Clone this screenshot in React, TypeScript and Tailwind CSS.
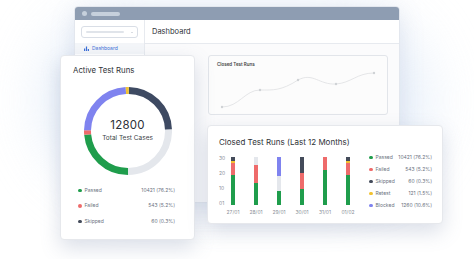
import React from "react"

const C = {
  green: "#1f9d4c",
  red: "#ee6b6b",
  dark: "#444b5a",
  navy: "#3e4a62",
  gray: "#e4e7ec",
  blue: "#7f83ef",
  yellow: "#f2c230",
}

function arc(cx: number, cy: number, r: number, a0: number, a1: number) {
  const p = (a: number) => {
    const t = ((a - 90) * Math.PI) / 180
    return [cx + r * Math.cos(t), cy + r * Math.sin(t)]
  }
  const [x0, y0] = p(a0)
  const [x1, y1] = p(a1)
  const large = a1 - a0 > 180 ? 1 : 0
  return `M${x0.toFixed(2)},${y0.toFixed(2)} A${r},${r} 0 ${large} 1 ${x1.toFixed(2)},${y1.toFixed(2)}`
}

const donut = [
  { from: 1, to: 88, color: C.navy },
  { from: 88, to: 180, color: C.gray },
  { from: 180, to: 265, color: C.green },
  { from: 265, to: 271, color: C.red },
  { from: 271, to: 357, color: C.blue },
  { from: 357, to: 361, color: C.yellow },
]

function Donut() {
  return (
    <div className="relative w-[88px] h-[88px]">
      <svg width="88" height="88" viewBox="0 0 88 88">
        {donut.map((s, i) => (
          <path key={i} d={arc(44, 44, 40.5, s.from, s.to)} fill="none" stroke={s.color} strokeWidth="7" />
        ))}
      </svg>
      <div className="absolute inset-0 flex flex-col items-center justify-center">
        <span className="text-[11.5px] leading-none text-[#2b2f36] tracking-[0.2px]">12800</span>
        <span className="text-[6.5px] leading-none text-[#3b3f46] mt-[4px]">Total Test Cases</span>
      </div>
    </div>
  )
}

// segments listed top to bottom, heights in px
const bars = [
  { label: "27/01", segs: [[C.dark, 4], [C.yellow, 2], [C.red, 12], [C.green, 30]] },
  { label: "28/01", segs: [[C.gray, 8], [C.red, 18], [C.green, 22]] },
  { label: "29/01", segs: [[C.blue, 19], [C.gray, 15], [C.green, 14]] },
  { label: "30/01", segs: [[C.dark, 16], [C.red, 16], [C.green, 16]] },
  { label: "31/01", segs: [[C.red, 13], [C.green, 35]] },
  { label: "01/02", segs: [[C.dark, 4], [C.yellow, 2], [C.red, 12], [C.green, 30]] },
] as { label: string; segs: [string, number][] }[]

const barLegend = [
  { name: "Passed", value: "10421 (76.2%)", color: C.green },
  { name: "Failed", value: "543 (5.2%)", color: C.red },
  { name: "Skipped", value: "60 (0.3%)", color: C.dark },
  { name: "Retest", value: "121 (1.5%)", color: C.yellow },
  { name: "Blocked", value: "1260 (10.6%)", color: C.blue },
]

function LegendRow({ name, value, color }: { name: string; value: string; color: string }) {
  return (
    <div className="flex items-center justify-between text-[5px] leading-none text-[#6b7280] h-[5px]">
      <div className="flex items-center gap-[3px]">
        <span className="w-[3.5px] h-[3.5px] rounded-full" style={{ background: color }} />
        <span>{name}</span>
      </div>
      <span>{value}</span>
    </div>
  )
}

function BackWindow() {
  return (
    <div className="absolute left-[74px] top-[6px] w-[326px] h-[197px] rounded-[4px] bg-white shadow-[0_6px_24px_rgba(120,140,180,0.18)] border border-[#e3e7ee] overflow-hidden flex flex-col">
      <div className="h-[13px] bg-[#8e9db2] flex items-center px-[7px] gap-[4px] shrink-0">
        <span className="w-[5px] h-[5px] rounded-full bg-[#c6d0dc]" />
        <span className="w-[29px] h-[4px] rounded-full bg-[#c6d0dc]" />
      </div>
      <div className="flex flex-1">
        <div className="w-[70px] border-r border-[#e7eaef] bg-white flex flex-col">
          <div className="mx-[6px] mt-[6px] h-[12px] rounded-[3px] border border-[#d9dee6] flex items-center justify-between px-[4px]">
            <span className="w-[38px] h-[2px] rounded-full bg-[#e0e4ea]" />
            <span className="w-0 h-0 border-l-[1.5px] border-r-[1.5px] border-t-[1.5px] border-l-transparent border-r-transparent border-t-[#b5bcc7]" />
          </div>
          <div className="mt-[5px] h-[11px] bg-[#f4f6f9] flex items-center gap-[3px] pl-[9px]">
            <svg width="5" height="5" viewBox="0 0 5 5">
              <rect x="0" y="2.5" width="1.2" height="2.5" fill="#3b6fd8" />
              <rect x="1.9" y="0.5" width="1.2" height="4.5" fill="#3b6fd8" />
              <rect x="3.8" y="3" width="1.2" height="2" fill="#3b6fd8" />
            </svg>
            <span className="text-[5px] leading-none text-[#3b6fd8]">Dashboard</span>
          </div>
        </div>
        <div className="flex-1 flex flex-col">
          <div className="h-[24px] border-b border-[#e7eaef] flex items-center pl-[7px] shrink-0">
            <span className="text-[7.5px] leading-none text-[#30343b]">Dashboard</span>
          </div>
          <div className="flex-1 bg-[#fbfbfc]">
            <div className="ml-[63px] mt-[11px] w-[180px] h-[60px] rounded-[3px] border border-[#e2e5ea] bg-[#fcfcfc] relative">
              <span className="absolute left-[8px] top-[7px] text-[4.5px] leading-none font-semibold text-[#444]">Closed Test Runs</span>
              <svg className="absolute inset-0" width="180" height="60" viewBox="0 0 180 60">
                <path
                  d="M13,51 C30,51 36,34 51,34 C64,34 72,35 89,24 C104,16 110,29 127,28 C142,27 148,17 165,17"
                  fill="none"
                  stroke="#dedfe2"
                  strokeWidth="0.8"
                />
                {[
                  [13, 51],
                  [51, 34],
                  [89, 24],
                  [127, 28],
                  [165, 17],
                ].map(([x, y], i) => (
                  <circle key={i} cx={x} cy={y} r="1.2" fill="#cfd2d6" />
                ))}
              </svg>
            </div>
          </div>
        </div>
      </div>
    </div>
  )
}

function ActiveCard() {
  return (
    <div className="absolute left-[60px] top-[55px] w-[135px] h-[185px] rounded-[4px] bg-white border border-[#e6e8ec] shadow-[0_8px_20px_rgba(90,110,150,0.22)] flex flex-col">
      <span className="mt-[11px] ml-[12px] text-[7.8px] leading-none text-[#2f3338]">Active Test Runs</span>
      <div className="flex justify-center mt-[12px]">
        <Donut />
      </div>
      <div className="mt-[13px] ml-[17px] mr-[19px] flex flex-col gap-[10.5px]">
        {barLegend.slice(0, 3).map((l) => (
          <LegendRow key={l.name} {...l} />
        ))}
      </div>
    </div>
  )
}

function BarCard() {
  return (
    <div className="absolute left-[207px] top-[125px] w-[236px] h-[99px] rounded-[4px] bg-white border border-[#e6e8ec] shadow-[0_8px_20px_rgba(90,110,150,0.22)] flex flex-col">
      <span className="mt-[12px] ml-[11px] text-[8px] leading-none text-[#2f3338]">Closed Test Runs (Last 12 Months)</span>
      <div className="flex mt-[11px] ml-[11px]">
        <div className="flex flex-col justify-between h-[50px] -mt-[1px] text-[5px] leading-none text-[#8a9099] w-[8px]">
          <span>30</span>
          <span>20</span>
          <span>10</span>
          <span>01</span>
        </div>
        <div className="flex ml-[0px] gap-[11px]">
          {bars.map((b) => (
            <div key={b.label} className="flex flex-col items-center w-[12px]">
              <div className="flex flex-col w-[4px] h-[48px]">
                {b.segs.map(([c, h], i) => (
                  <div key={i} style={{ background: c, height: h }} />
                ))}
              </div>
              <span className="mt-[5px] text-[5px] leading-none text-[#8a9099]">{b.label}</span>
            </div>
          ))}
        </div>
        <div className="ml-[15px] w-[63px] flex flex-col gap-[7px] -mt-[2px]">
          {barLegend.map((l) => (
            <LegendRow key={l.name} {...l} />
          ))}
        </div>
      </div>
    </div>
  )
}

export default function App() {
  return (
    <div className="relative w-[474px] h-[259px] bg-white overflow-hidden font-['Inter',sans-serif]">
      <div className="absolute left-[40px] top-[10px] w-[390px] h-[180px] rounded-full bg-[#dfeaf8] blur-[28px] opacity-70" />
      <BackWindow />
      <ActiveCard />
      <BarCard />
    </div>
  )
}
